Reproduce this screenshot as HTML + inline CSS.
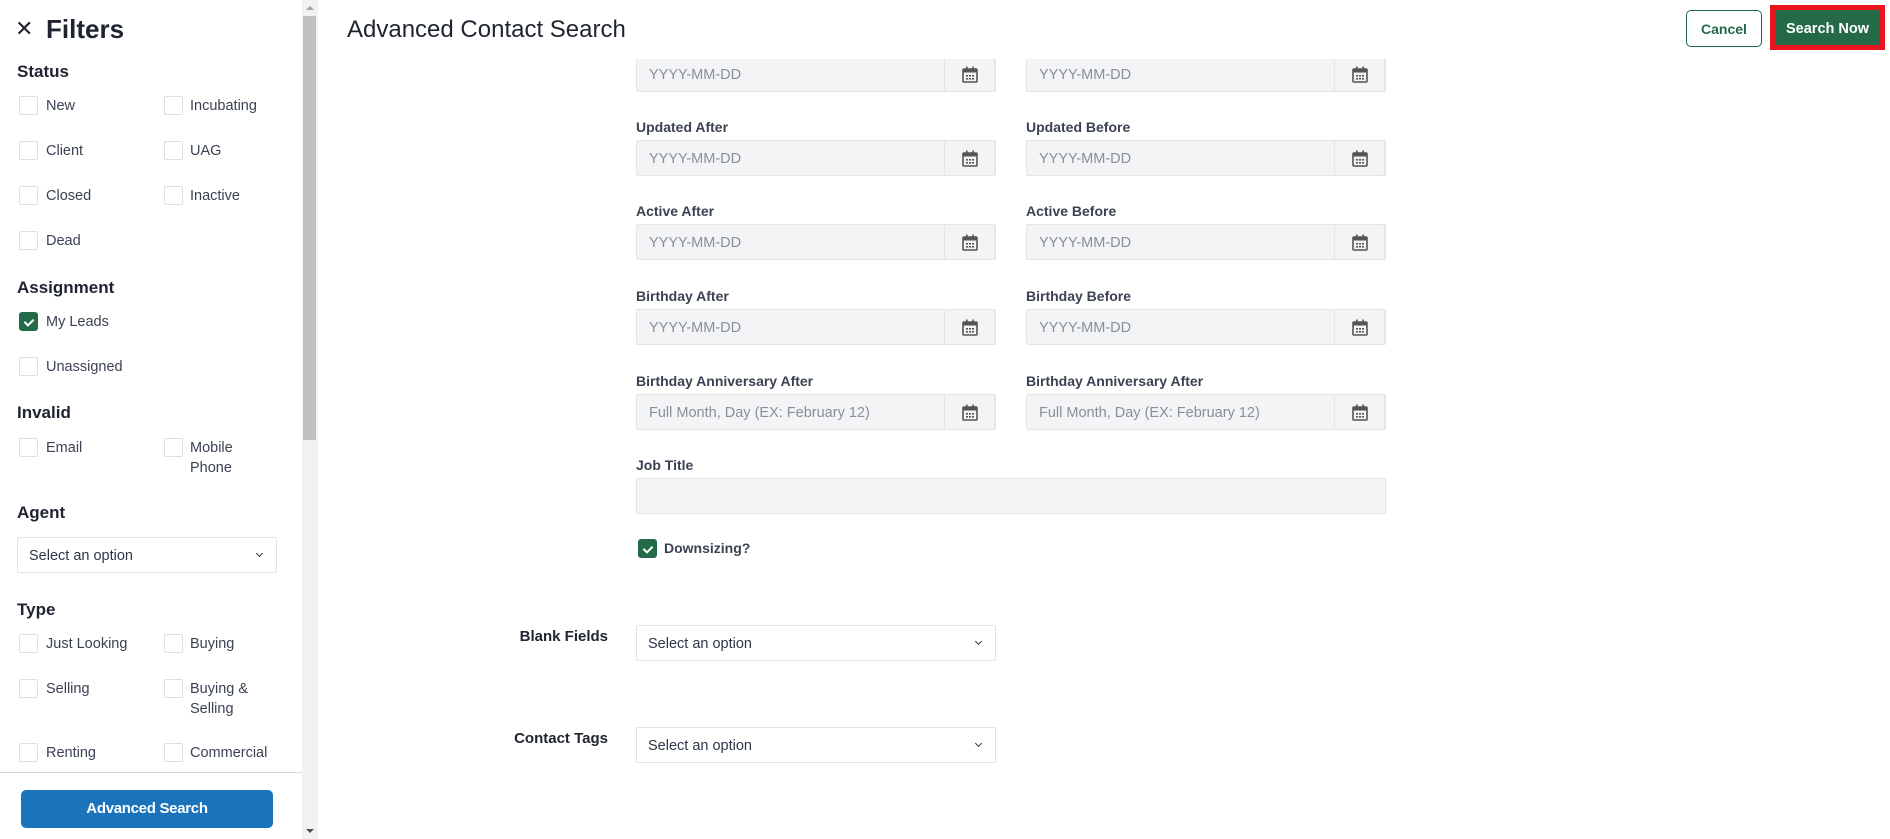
<!DOCTYPE html>
<html><head><meta charset="utf-8"><style>
*{box-sizing:border-box;margin:0;padding:0}
body{width:1890px;height:839px;overflow:hidden;background:#fff;font-family:"Liberation Sans",sans-serif;color:#2d3748;position:relative}
.a{position:absolute}
.sb{left:0;top:0;width:302px;height:839px;background:#fff}
.h{font-weight:bold;font-size:17px;color:#1f2430;left:17px}
.cb{width:19px;height:19px;border:1px solid #dcdfe3;border-radius:2px;background:#fff}
.cl{font-size:14.5px;color:#3b4252;line-height:20px}
.chk{background:#256a48;border-color:#256a48;border-radius:3px}
.chk::after{content:"";position:absolute;left:6px;top:4px;width:4px;height:7px;border:solid #fff;border-width:0 2px 2px 0;transform:rotate(45deg)}
.lbl{font-size:14px;font-weight:bold;color:#3b4252}
.in{height:36px;background:#f3f4f6;border:1px solid #e3e5e8;border-radius:2px}
.in span{position:absolute;left:12px;top:10px;font-size:14.5px;color:#8a8f98}
.cal{position:absolute;right:0;top:-1px;width:51px;height:36px;border:1px solid #e3e5e8;border-radius:0 2px 2px 0;background:#f3f4f6}
.cal svg{position:absolute;left:17px;top:9px}
.sel{height:36px;border:1px solid #e1e3e6;border-radius:2px;background:#fff}
.sel span{position:absolute;left:11px;top:10px;font-size:14.5px;color:#2d3748}
.sel i{position:absolute;right:14px;top:13px;width:5px;height:5px;border:solid #333;border-width:0 1.3px 1.3px 0;transform:rotate(45deg)}
</style></head><body>
<div class="a sb">
<div class="a" style="left:15px;top:16px;font-size:22px;color:#1f2430">✕</div>
<div class="a" style="left:46px;top:14px;font-size:26px;font-weight:bold;color:#1f2430">Filters</div>
<div class="a h" style="top:62px">Status</div>
<div class="a cb" style="left:19px;top:96px"></div><div class="a cl" style="left:46px;top:96px">New</div>
<div class="a cb" style="left:164px;top:96px"></div><div class="a cl" style="left:190px;top:96px">Incubating</div>
<div class="a cb" style="left:19px;top:141px"></div><div class="a cl" style="left:46px;top:141px">Client</div>
<div class="a cb" style="left:164px;top:141px"></div><div class="a cl" style="left:190px;top:141px">UAG</div>
<div class="a cb" style="left:19px;top:186px"></div><div class="a cl" style="left:46px;top:186px">Closed</div>
<div class="a cb" style="left:164px;top:186px"></div><div class="a cl" style="left:190px;top:186px">Inactive</div>
<div class="a cb" style="left:19px;top:231px"></div><div class="a cl" style="left:46px;top:231px">Dead</div>
<div class="a h" style="top:278px">Assignment</div>
<div class="a cb chk" style="left:19px;top:312px"></div><div class="a cl" style="left:46px;top:312px">My Leads</div>
<div class="a cb" style="left:19px;top:357px"></div><div class="a cl" style="left:46px;top:357px">Unassigned</div>
<div class="a h" style="top:403px">Invalid</div>
<div class="a cb" style="left:19px;top:438px"></div><div class="a cl" style="left:46px;top:438px">Email</div>
<div class="a cb" style="left:164px;top:438px"></div><div class="a cl" style="left:190px;top:438px">Mobile<br>Phone</div>
<div class="a h" style="top:503px">Agent</div>
<div class="a sel" style="left:17px;top:537px;width:260px"><span>Select an option</span><i></i></div>
<div class="a h" style="top:600px">Type</div>
<div class="a cb" style="left:19px;top:634px"></div><div class="a cl" style="left:46px;top:634px">Just Looking</div>
<div class="a cb" style="left:164px;top:634px"></div><div class="a cl" style="left:190px;top:634px">Buying</div>
<div class="a cb" style="left:19px;top:679px"></div><div class="a cl" style="left:46px;top:679px">Selling</div>
<div class="a cb" style="left:164px;top:679px"></div><div class="a cl" style="left:190px;top:679px">Buying &amp;<br>Selling</div>
<div class="a cb" style="left:19px;top:743px"></div><div class="a cl" style="left:46px;top:743px">Renting</div>
<div class="a cb" style="left:164px;top:743px"></div><div class="a cl" style="left:190px;top:743px">Commercial</div>
<div class="a" style="left:0;top:772px;width:302px;height:1px;background:#d5d7da"></div>
<div class="a" style="left:21px;top:790px;width:252px;height:38px;background:#1a73bb;border-radius:5px;color:#fff;font-weight:bold;font-size:15px;text-align:center;line-height:38px;letter-spacing:-0.3px">Advanced Search</div>
</div>
<div class="a" style="left:302px;top:0;width:16px;height:839px;background:#f1f1f1"></div>
<div class="a" style="left:303px;top:16px;width:13px;height:424px;background:#c1c1c1"></div>
<div class="a" style="left:306px;top:6px;width:0;height:0;border:4px solid transparent;border-bottom:4px solid #a3a3a3;border-top:0"></div>
<div class="a" style="left:306px;top:829px;width:0;height:0;border:4px solid transparent;border-top:4px solid #505050;border-bottom:0"></div>

<svg width="0" height="0" style="position:absolute"><defs><symbol id="c" viewBox="0 0 16 17"><rect x="1" y="3" width="14" height="13" rx="1" fill="none" stroke="#555" stroke-width="1.6"/><rect x="1" y="3" width="14" height="3.5" fill="#555"/><rect x="4" y="0.5" width="1.6" height="3.5" fill="#555"/><rect x="10.4" y="0.5" width="1.6" height="3.5" fill="#555"/><g fill="#555"><rect x="4" y="9" width="2" height="1.6"/><rect x="7" y="9" width="2" height="1.6"/><rect x="10" y="9" width="2" height="1.6"/><rect x="4" y="12" width="2" height="1.6"/><rect x="7" y="12" width="2" height="1.6"/><rect x="10" y="12" width="2" height="1.6"/></g></symbol></defs></svg>

<div class="a in" style="left:636px;top:56px;width:360px"><span>YYYY-MM-DD</span><div class="cal"><svg width="16" height="17"><use href="#c"/></svg></div></div>
<div class="a in" style="left:1026px;top:56px;width:360px"><span>YYYY-MM-DD</span><div class="cal"><svg width="16" height="17"><use href="#c"/></svg></div></div>
<div class="a" style="left:318px;top:0;width:1572px;height:59px;background:#fff"></div>
<div class="a" style="left:347px;top:16px;font-size:24px;color:#1f2430">Advanced Contact Search</div>
<div class="a" style="left:1686px;top:10px;width:76px;height:37px;border:1px solid #256a48;border-radius:5px;color:#256a48;font-weight:bold;font-size:14px;text-align:center;line-height:37px">Cancel</div>
<div class="a" style="left:1770px;top:5px;width:115px;height:45px;background:#e8141f"></div>
<div class="a" style="left:1775px;top:10px;width:105px;height:35px;background:#256a48;color:#fff;font-weight:bold;font-size:14.5px;text-align:center;line-height:38px">Search Now</div>

<div class="a lbl" style="left:636px;top:119px">Updated After</div>
<div class="a lbl" style="left:1026px;top:119px">Updated Before</div>
<div class="a in" style="left:636px;top:140px;width:360px"><span>YYYY-MM-DD</span><div class="cal"><svg width="16" height="17"><use href="#c"/></svg></div></div>
<div class="a in" style="left:1026px;top:140px;width:360px"><span>YYYY-MM-DD</span><div class="cal"><svg width="16" height="17"><use href="#c"/></svg></div></div>

<div class="a lbl" style="left:636px;top:203px">Active After</div>
<div class="a lbl" style="left:1026px;top:203px">Active Before</div>
<div class="a in" style="left:636px;top:224px;width:360px"><span>YYYY-MM-DD</span><div class="cal"><svg width="16" height="17"><use href="#c"/></svg></div></div>
<div class="a in" style="left:1026px;top:224px;width:360px"><span>YYYY-MM-DD</span><div class="cal"><svg width="16" height="17"><use href="#c"/></svg></div></div>

<div class="a lbl" style="left:636px;top:288px">Birthday After</div>
<div class="a lbl" style="left:1026px;top:288px">Birthday Before</div>
<div class="a in" style="left:636px;top:309px;width:360px"><span>YYYY-MM-DD</span><div class="cal"><svg width="16" height="17"><use href="#c"/></svg></div></div>
<div class="a in" style="left:1026px;top:309px;width:360px"><span>YYYY-MM-DD</span><div class="cal"><svg width="16" height="17"><use href="#c"/></svg></div></div>

<div class="a lbl" style="left:636px;top:373px">Birthday Anniversary After</div>
<div class="a lbl" style="left:1026px;top:373px">Birthday Anniversary After</div>
<div class="a in" style="left:636px;top:394px;width:360px"><span>Full Month, Day (EX: February 12)</span><div class="cal"><svg width="16" height="17"><use href="#c"/></svg></div></div>
<div class="a in" style="left:1026px;top:394px;width:360px"><span>Full Month, Day (EX: February 12)</span><div class="cal"><svg width="16" height="17"><use href="#c"/></svg></div></div>

<div class="a lbl" style="left:636px;top:457px">Job Title</div>
<div class="a in" style="left:636px;top:478px;width:750px"></div>

<div class="a cb chk" style="left:638px;top:539px"></div>
<div class="a lbl" style="left:664px;top:540px;font-size:14px">Downsizing?</div>

<div class="a" style="left:458px;top:628px;width:150px;text-align:right;font-weight:bold;font-size:15px;color:#1f2430">Blank Fields</div>
<div class="a sel" style="left:636px;top:625px;width:360px"><span>Select an option</span><i></i></div>
<div class="a" style="left:458px;top:730px;width:150px;text-align:right;font-weight:bold;font-size:15px;color:#1f2430">Contact Tags</div>
<div class="a sel" style="left:636px;top:727px;width:360px"><span>Select an option</span><i></i></div>
</body></html>
